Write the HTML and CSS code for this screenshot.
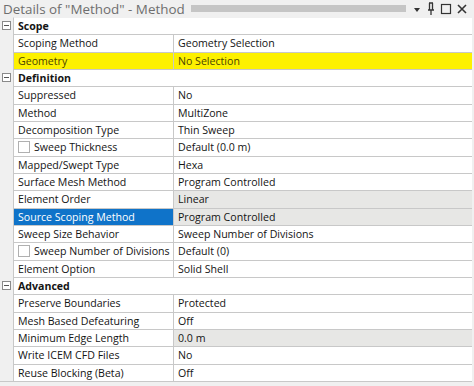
FILE: index.html
```html
<!DOCTYPE html>
<html lang="en">
<head>
  <meta charset="UTF-8">
  <title>Details of "Method" - Method</title>
  <link rel="stylesheet" href="styles.css">
</head>
<body>
  <div class="panel">
    <div class="panel__head">
      <span class="panel__title">Details of "Method" - Method</span>
      <span class="panel__grip"></span>
      <span class="panel__tools">
        <svg width="10" height="12" viewBox="0 0 10 12"><path d="M2 5h6l-3 4z" fill="#333"/></svg>
        <svg width="10" height="14" viewBox="0 0 10 14"><path d="M3 1h4M3.5 1v7M6.5 1v7M2 8h6M5 8v5" stroke="#333" stroke-width="1.3" fill="none"/></svg>
        <svg width="12" height="14" viewBox="0 0 12 14"><rect x="1.5" y="2.5" width="9" height="9" stroke="#333" stroke-width="1.2" fill="none"/></svg>
        <svg width="12" height="14" viewBox="0 0 12 14"><path d="M2 3l8 8M10 3l-8 8" stroke="#333" stroke-width="1.6"/></svg>
      </span>
    </div>

    <div class="grid">
      <div class="row row--group"><span class="gutter"><i class="toggle"></i></span><span class="cell cell--group">Scope</span></div>
      <div class="row"><span class="gutter"></span><span class="cell name">Scoping Method</span><span class="cell value">Geometry Selection</span></div>
      <div class="row row--warn"><span class="gutter"></span><span class="cell name">Geometry</span><span class="cell value">No Selection</span></div>

      <div class="row row--group"><span class="gutter"><i class="toggle"></i></span><span class="cell cell--group">Definition</span></div>
      <div class="row"><span class="gutter"></span><span class="cell name">Suppressed</span><span class="cell value">No</span></div>
      <div class="row"><span class="gutter"></span><span class="cell name">Method</span><span class="cell value">MultiZone</span></div>
      <div class="row"><span class="gutter"></span><span class="cell name">Decomposition Type</span><span class="cell value">Thin Sweep</span></div>
      <div class="row"><span class="gutter"></span><span class="cell name"><i class="check"></i>Sweep Thickness</span><span class="cell value">Default (0.0 m)</span></div>
      <div class="row"><span class="gutter"></span><span class="cell name">Mapped/Swept Type</span><span class="cell value">Hexa</span></div>
      <div class="row"><span class="gutter"></span><span class="cell name">Surface Mesh Method</span><span class="cell value">Program Controlled</span></div>
      <div class="row"><span class="gutter"></span><span class="cell name">Element Order</span><span class="cell value value--ro">Linear</span></div>
      <div class="row"><span class="gutter"></span><span class="cell name name--sel">Source Scoping Method</span><span class="cell value value--ro">Program Controlled</span></div>
      <div class="row"><span class="gutter"></span><span class="cell name">Sweep Size Behavior</span><span class="cell value">Sweep Number of Divisions</span></div>
      <div class="row"><span class="gutter"></span><span class="cell name"><i class="check"></i>Sweep Number of Divisions</span><span class="cell value">Default (0)</span></div>
      <div class="row"><span class="gutter"></span><span class="cell name">Element Option</span><span class="cell value">Solid Shell</span></div>

      <div class="row row--group"><span class="gutter"><i class="toggle"></i></span><span class="cell cell--group">Advanced</span></div>
      <div class="row"><span class="gutter"></span><span class="cell name">Preserve Boundaries</span><span class="cell value">Protected</span></div>
      <div class="row"><span class="gutter"></span><span class="cell name">Mesh Based Defeaturing</span><span class="cell value">Off</span></div>
      <div class="row"><span class="gutter"></span><span class="cell name">Minimum Edge Length</span><span class="cell value value--ro">0.0 m</span></div>
      <div class="row"><span class="gutter"></span><span class="cell name">Write ICEM CFD Files</span><span class="cell value">No</span></div>
      <div class="row"><span class="gutter"></span><span class="cell name">Reuse Blocking (Beta)</span><span class="cell value">Off</span></div>
    </div>
  </div>
</body>
</html>
```

FILE: styles.css
```css
html, body {
  margin: 0;
  padding: 0;
  background: #fff;
}
body {
  font-family: "Open Sans", "Noto Sans", sans-serif;
  font-size: 10.6px;
  color: #141414;
}

.panel {
  width: 474px;
  height: 386px;
  background: #f0f0f0;
  overflow: hidden;
}

/* title bar */
.panel__head {
  height: 17px;
  display: flex;
  align-items: center;
  padding: 0 0 0 3px;
  background: #f0f0f0;
}
.panel__title {
  color: #6e6e6e;
  font-size: 13.4px;
  white-space: nowrap;
}
.panel__grip {
  flex: 1;
  height: 7px;
  margin: 0 6px;
  background-image: radial-gradient(#c4c4c4 0.7px, transparent 0.9px);
  background-size: 2px 2px;
}
.panel__tools {
  display: flex;
  align-items: center;
  gap: 4px;
  padding-right: 6px;
}
.panel__tools svg {
  display: block;
}

/* property grid */
.grid {
  margin-right: 2px;
  border-bottom: 1px solid #c8c8c8;
}
.row {
  display: flex;
  height: 17.33px;
  box-sizing: border-box;
}
.gutter {
  width: 13px;
  flex: none;
  background: #f0f0f0;
  display: flex;
  align-items: center;
  justify-content: center;
}
.toggle {
  width: 7px;
  height: 7px;
  border: 1px solid #8a8a8a;
  background: linear-gradient(#555, #555) center / 5px 1px no-repeat, #fff;
}
.cell {
  display: flex;
  align-items: center;
  padding-left: 4px;
  white-space: nowrap;
  overflow: hidden;
  border-top: 1px solid #c8c8c8;
  background: #fff;
}
.row:first-child .cell {
  border-top-color: #f0f0f0;
}
.cell--group {
  flex: 1;
  font-weight: 700;
  border-left: 1px solid #c8c8c8;
}
.name {
  width: 155px;
  flex: none;
  border-left: 1px solid #c8c8c8;
  border-right: 1px solid #c8c8c8;
}
.value {
  flex: 1;
}
.value--ro {
  background: #e7e7e5;
}
.name--sel {
  background: #0f73c9;
  color: #fff;
}
.row--warn .cell {
  background: #fdf100;
  color: #4a4300;
}
.check {
  width: 10px;
  height: 10px;
  border: 1px solid #b0b0b0;
  background: #fff;
  margin-right: 4px;
  flex: none;
}
```
